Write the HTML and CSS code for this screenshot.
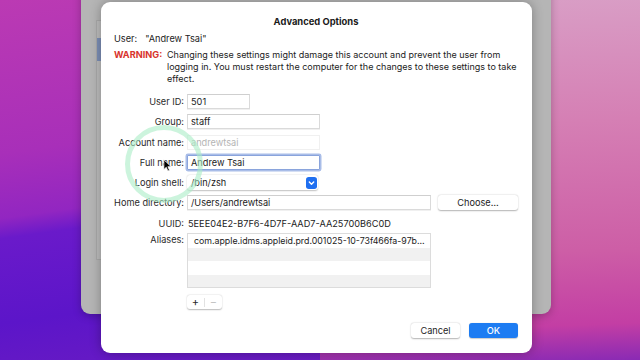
FILE: index.html
```html
<!DOCTYPE html>
<html lang="en">
<head>
    <meta charset="UTF-8">
    <title>Advanced Options</title>
    <link rel="stylesheet" href="styles.css">
</head>
<body>

<div class="desktop">
    <div class="prefs-window">
        <div class="sidebar">
            <div class="sidebar-sel"></div>
        </div>
    </div>

    <div class="sheet">
        <h1 class="sheet-title">Advanced Options</h1>
        <p class="user-line"><span>User:</span><span class="user-name">"Andrew Tsai"</span></p>

        <div class="warning">
            <strong>WARNING:</strong>
            <p>Changing these settings might damage this account and prevent the user from logging in. You must restart the computer for the changes to these settings to take effect.</p>
        </div>

        <div class="form">
            <label>User ID:</label>
            <div class="field"><span class="input w-id">501</span></div>

            <label>Group:</label>
            <div class="field"><span class="input w-mid">staff</span></div>

            <label>Account name:</label>
            <div class="field"><span class="input w-mid disabled">andrewtsai</span></div>

            <label>Full name:</label>
            <div class="field"><span class="input w-mid focused">Andrew Tsai</span></div>

            <label>Login shell:</label>
            <div class="field">
                <span class="popup">
                    <span>/bin/zsh</span>
                    <svg class="chevron" viewBox="0 0 12 13" width="11" height="12">
                        <rect width="12" height="13" rx="3" fill="#1f6ff0"/>
                        <path d="M3.6 5.4 L6 7.8 L8.4 5.4" stroke="#fff" stroke-width="1.5" fill="none" stroke-linecap="round" stroke-linejoin="round"/>
                    </svg>
                </span>
            </div>

            <label>Home directory:</label>
            <div class="field">
                <span class="input w-wide">/Users/andrewtsai</span>
                <button class="btn btn-choose">Choose…</button>
            </div>

            <label class="uuid-label">UUID:</label>
            <div class="field plain">5EEE04E2-B7F6-4D7F-AAD7-AA25700B6C0D</div>

            <label class="top">Aliases:</label>
            <div class="field list-field">
                <ul class="alias-list">
                    <li>com.apple.idms.appleid.prd.001025-10-73f466fa-97b…</li>
                    <li></li>
                    <li></li>
                    <li></li>
                </ul>
            </div>

            <span></span>
            <div class="field">
                <span class="plus-minus">
                    <span class="pm plus">+</span>
                    <span class="pm minus">−</span>
                </span>
            </div>
        </div>

        <div class="actions">
            <button class="btn">Cancel</button>
            <button class="btn btn-primary">OK</button>
        </div>
    </div>

    <div class="click-ring"></div>
    <svg class="cursor" viewBox="0 0 12 18" width="9" height="13">
        <path d="M1 1 L1 14.5 L4.3 11.4 L6.6 16.6 L8.8 15.6 L6.5 10.6 L11 10.6 Z" fill="#000" stroke="#fff" stroke-width="1"/>
    </svg>
</div>

</body>
</html>
```

FILE: styles.css
```css
body {
    margin: 0;
    font-family: Inter, "Noto Sans", sans-serif;
    font-size: 9.2px;
    color: #222;
    background: #6a1cc6;
}
.desktop {
    position: relative;
    width: 640px;
    height: 360px;
    overflow: hidden;
    background-color: #8a28c0;
    background-image:
        linear-gradient(178deg, #d99fc6 0%, #d57fb4 35%, #cd5ea6 70%, #c33ea4 90%, #8a2ab4 100%),
        linear-gradient(172deg, #bb3ab3 0%, #a82fb9 38%, #9226c1 54%, #6a1aca 59%, #5c15c9 80%, #6a1cc2 100%);
    background-size: 50% 100%, 50% 100%;
    background-position: right top, left top;
    background-repeat: no-repeat;
}

/* window behind the sheet */
.prefs-window {
    position: absolute;
    left: 81px;
    top: -12px;
    width: 470px;
    height: 326px;
    background: #b5b5b5;
    border-radius: 0 0 9px 9px;
    box-shadow: 0 2px 8px rgba(0,0,0,0.25);
}
.sidebar {
    margin: 32px 0 0 15px;
    width: 180px;
    height: 238px;
    background: #bdbdbd;
    border: 1px solid #a9a9a9;
}
.sidebar-sel {
    margin-top: 17px;
    height: 23px;
    background: #7d8fb6;
}

/* the sheet */
.sheet {
    position: absolute;
    left: 101px;
    top: 2px;
    width: 431px;
    height: 351px;
    box-sizing: border-box;
    padding: 14px 14px 15px 13px;
    background: #fff;
    border-radius: 9px;
    box-shadow: 0 0 12px rgba(0,0,0,0.3);
    display: flex;
    flex-direction: column;
}
.sheet-title {
    margin: 0;
    font-size: 9.4px;
    font-weight: 700;
    line-height: 12px;
    text-align: center;
    color: #1a1a1a;
}
.user-line {
    margin: 5px 0 0 0;
    line-height: 12px;
}
.user-name {
    margin-left: 8px;
}
.warning {
    display: flex;
    margin-top: 4px;
    line-height: 12px;
}
.warning strong {
    color: #d8342c;
    font-weight: 700;
    width: 53px;
    flex: none;
}
.warning p {
    margin: 0;
    width: 356px;
    font-size: 9px;
}

/* form grid */
.form {
    display: grid;
    grid-template-columns: 70px 1fr;
    grid-template-rows: repeat(6, 15px) 12.5px 55px 14px;
    column-gap: 3px;
    row-gap: 5.25px;
    margin-top: 9px;
    align-items: center;
}
.form label {
    text-align: right;
    color: #2a2a2a;
    line-height: 15px;
}
.form label.uuid-label {
    align-self: start;
}
.form label.top {
    align-self: start;
    line-height: 12px;
    padding-top: 1px;
}
.field {
    display: flex;
    align-items: center;
    height: 15px;
}
.field.plain {
    align-self: start;
    padding-left: 1px;
}
.field.list-field {
    height: 55px;
    align-self: start;
}
.input {
    display: block;
    box-sizing: border-box;
    height: 15px;
    line-height: 13px;
    padding: 0 3px;
    background: #fff;
    border: 1px solid #dadada;
    border-top-color: #cfcfcf;
    box-shadow: 0 1px 0.5px rgba(0,0,0,0.06);
    color: #1b1b1b;
    white-space: nowrap;
}
.w-id { width: 63px; }
.w-mid { width: 133px; }
.w-wide { width: 244px; }
.input.disabled {
    color: #b4b4b4;
    border-color: #f0f0f0;
    box-shadow: none;
}
.input.focused {
    border: 1px solid #8aa4dc;
    box-shadow: 0 0 0 1.5px #a9bde8;
    border-radius: 1px;
}
.popup {
    display: flex;
    align-items: center;
    justify-content: space-between;
    box-sizing: border-box;
    width: 131px;
    height: 15px;
    padding: 0 1px 0 4px;
    background: #fff;
    border-radius: 3px;
    box-shadow: 0 0.5px 1.5px rgba(0,0,0,0.25);
    color: #1b1b1b;
}
.chevron {
    display: block;
}

.alias-list {
    list-style: none;
    margin: 0;
    padding: 0;
    width: 244px;
    height: 55px;
    box-sizing: border-box;
    border: 1px solid #dcdcdc;
    overflow: hidden;
}
.alias-list li {
    height: 13.5px;
    line-height: 13.5px;
    padding: 0 0 0 6px;
    font-size: 8.8px;
    white-space: nowrap;
    color: #1b1b1b;
}
.alias-list li:nth-child(even) {
    background: #f1f1f1;
}

.plus-minus {
    display: flex;
    height: 14px;
    width: 35px;
    margin-top: 3px;
    border-radius: 3px;
    background: #fff;
    box-shadow: 0 0.5px 1.5px rgba(0,0,0,0.28);
    align-items: center;
}
.pm {
    flex: 1;
    text-align: center;
    font-size: 11px;
    line-height: 14px;
}
.plus {
    color: #2a2a2a;
    border-right: 1px solid #e2e2e2;
    height: 9px;
    line-height: 9px;
}
.minus {
    color: #c4c4c4;
}

/* buttons */
.btn {
    font-family: inherit;
    font-size: 9.2px;
    color: #1d1d1d;
    background: #fff;
    border: none;
    border-radius: 3px;
    box-shadow: 0 0.5px 1.5px rgba(0,0,0,0.3);
    height: 15px;
    width: 49px;
    padding: 0;
    line-height: 15px;
}
.btn-choose {
    width: 80px;
    margin-left: 7px;
}
.btn-primary {
    background: #1d7cf2;
    color: #fff;
    font-weight: 500;
    box-shadow: 0 0.5px 1px rgba(0,0,0,0.2);
}
.actions {
    margin-top: auto;
    display: flex;
    justify-content: flex-end;
    gap: 9px;
}

/* click highlight and pointer */
.click-ring {
    position: absolute;
    left: 125px;
    top: 125px;
    width: 68px;
    height: 68px;
    border: 5px solid rgba(170, 236, 198, 0.6);
    border-radius: 50%;
}
.cursor {
    position: absolute;
    left: 163px;
    top: 159px;
}
```
